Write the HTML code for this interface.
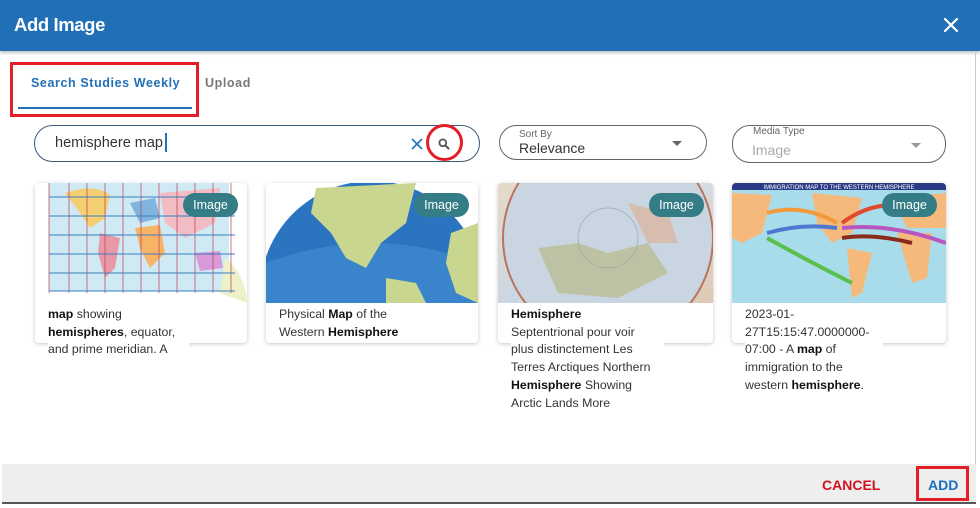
<!DOCTYPE html>
<html><head><meta charset="utf-8">
<style>
*{box-sizing:border-box;margin:0;padding:0}
body{width:980px;height:508px;overflow:hidden;background:#fff;font-family:"Liberation Sans",sans-serif;position:relative}
.hdr{position:absolute;left:0;top:0;width:980px;height:51px;background:#206fb7;box-shadow:0 2px 3px rgba(0,0,0,.25)}
.hdr h1{position:absolute;left:14px;top:14px;color:#fff;font-size:18.5px;font-weight:bold;letter-spacing:-0.4px}
.close{position:absolute;left:943px;top:17px;width:16px;height:16px}
.rline{position:absolute;left:975px;top:51px;width:1px;height:415px;background:#ccc}
.tab1{position:absolute;left:31px;top:76px;color:#2270b8;font-size:12.5px;font-weight:bold;letter-spacing:.6px}
.tab2{position:absolute;left:205px;top:76px;color:#777;font-size:12.5px;font-weight:bold;letter-spacing:.6px}
.uline{position:absolute;left:18px;top:107px;width:174px;height:2px;background:#2270b8}
.redbox{position:absolute;border:3px solid #e41e26}
.search{position:absolute;left:34px;top:125px;width:446px;height:37px;border:1.5px solid #3a5a78;border-radius:19px}
.search span{position:absolute;left:20px;top:9px;font-size:14.5px;color:#333}
.caret{position:absolute;left:165px;top:133px;width:1.5px;height:19px;background:#2270b8}
.sel{position:absolute;border:1.3px solid #666;border-radius:18px}
.sel .lab{position:absolute;left:19px;font-size:10px;color:#666}
.sel .val{position:absolute;left:19px;font-size:14px}
.tri{position:absolute;width:0;height:0;border-left:5px solid transparent;border-right:5px solid transparent;border-top:5px solid #666}
.card{position:absolute;top:183px;height:160px;background:#fff;border-radius:4px;box-shadow:0 1px 4px rgba(0,0,0,.22);overflow:visible}
.img{position:absolute;left:0;top:0;right:0;height:120px;overflow:hidden;border-radius:4px 4px 0 0}
.badge{position:absolute;top:10px;right:9px;width:55px;height:24px;border-radius:12px;background:#347c86;color:#fff;font-size:12.5px;text-align:center;line-height:24px}
.txt{position:absolute;left:13px;top:123px;font-size:12.3px;line-height:17.7px;color:#333;background:#fff;white-space:nowrap;padding-right:14px}
.txt b{color:#111}
.foot{position:absolute;left:2px;top:464px;width:974px;height:40px;background:#eeeeee;border-bottom:2px solid #555}
.cancel{position:absolute;left:822px;top:477px;color:#d0131f;font-weight:bold;font-size:14px}
.add{position:absolute;left:928px;top:477px;color:#1a6fc0;font-weight:bold;font-size:14px}
</style></head><body>
<div class="hdr"><h1>Add Image</h1>
<svg class="close" viewBox="0 0 16 16"><path d="M2 2L14 14M14 2L2 14" stroke="#fff" stroke-width="2.2" stroke-linecap="round"/></svg></div>
<div class="rline"></div>
<div class="tab1">Search Studies Weekly</div>
<div class="tab2">Upload</div>
<div class="uline"></div>
<div class="redbox" style="left:10px;top:62px;width:189px;height:55px"></div>

<div class="search"><span>hemisphere map</span>
<svg style="position:absolute;left:375px;top:11px" width="14" height="14" viewBox="0 0 14 14"><path d="M2 2L12 12M12 2L2 12" stroke="#2270b8" stroke-width="1.6"/></svg>
<svg style="position:absolute;left:402px;top:11px" width="14" height="14" viewBox="0 0 14 14"><circle cx="5.8" cy="5.8" r="3.4" fill="none" stroke="#555" stroke-width="1.8"/><path d="M8.3 8.3L11.5 11.5" stroke="#555" stroke-width="2" stroke-linecap="round"/></svg>
</div>
<div class="caret"></div>
<div class="redbox" style="left:426px;top:124px;width:37px;height:37px;border-radius:50%"></div>

<div class="sel" style="left:499px;top:125px;width:208px;height:35px"><div class="lab" style="top:3px">Sort By</div><div class="val" style="top:14px;color:#333">Relevance</div><div class="tri" style="left:172px;top:15px"></div></div>
<div class="sel" style="left:732px;top:125px;width:214px;height:38px"><div class="lab" style="top:0px;background:#fff;padding:0 2px;left:18px">Media Type</div><div class="val" style="top:16px;color:#aaa">Image</div><div class="tri" style="left:178px;top:17px;border-top-color:#999"></div></div>

<div class="card" style="left:35px;width:212px">
<div class="img" style="background:#d6eef8">
<svg width="212" height="120" viewBox="0 0 212 120">
<rect x="0" y="0" width="212" height="120" fill="#fff"/>
<rect x="14" y="0" width="180" height="108" fill="#cfe9f5"/>
<path d="M30 10 Q60 0 75 12 L70 35 L55 45 L45 30 Z" fill="#f4cf72"/>
<path d="M65 50 L85 55 L80 85 L70 95 L63 70 Z" fill="#e79aa5"/>
<path d="M95 20 L120 15 L125 35 L105 40 Z" fill="#7fb6e0"/>
<path d="M100 45 L125 42 L130 70 L115 85 L105 65 Z" fill="#f7b467"/>
<path d="M125 10 L185 5 L180 40 L150 55 L130 40 Z" fill="#f1bcc4"/>
<path d="M160 70 L185 68 L188 85 L165 88 Z" fill="#d89ad8"/>
<path d="M190 75 Q210 90 212 120 L185 110 Z" fill="#eef0c8"/>
<g stroke="#c23a55" stroke-width="1" opacity=".7"><path d="M14 0V110M34 0V110M52 0V110M70 0V110M88 0V110M106 0V110M124 0V110M142 0V110M160 0V110M178 0V110M196 0V110"/></g>
<g stroke="#3a7fc0" stroke-width="1.2" opacity=".8"><path d="M14 14H200M14 33H200M14 52H200M14 71H200M14 90H200M14 108H200"/></g>
</svg>
<div class="badge">Image</div></div>
<div class="txt"><b>map</b> showing<br><b>hemispheres</b>, equator,<br>and prime meridian. A</div></div>

<div class="card" style="left:266px;width:212px">
<div class="img" style="background:#fff">
<svg width="212" height="120" viewBox="0 0 212 120">
<circle cx="106" cy="110" r="112" fill="#2a74c0"/>
<path d="M0 80 Q106 40 212 80 L212 120 L0 120Z" fill="#4a93d6" opacity=".5"/>
<path d="M50 5 L150 0 L140 40 L115 60 L100 85 L80 75 L65 50 L45 30Z" fill="#c9d68f"/>
<path d="M120 95 L150 100 L160 120 L120 120Z" fill="#c9d68f"/>
<path d="M185 50 L212 40 L212 120 L190 110 L180 80Z" fill="#c9d68f"/>
</svg>
<div class="badge">Image</div></div>
<div class="txt">Physical <b>Map</b> of the<br>Western <b>Hemisphere</b></div></div>

<div class="card" style="left:498px;width:215px">
<div class="img" style="background:linear-gradient(135deg,#e8d9c8,#c9d7e4 40%,#d5dde6 60%,#dfc9b0)">
<svg width="215" height="120" viewBox="0 0 215 120">
<circle cx="110" cy="55" r="105" fill="#c9d6e2" stroke="#b9735c" stroke-width="2"/>
<path d="M40 65 L80 60 L110 70 L150 60 L170 90 L120 115 L60 110Z" fill="#b9b98a" opacity=".7"/>
<path d="M130 20 L170 30 L180 60 L150 60Z" fill="#d9b7a4" opacity=".8"/>
<circle cx="110" cy="55" r="30" fill="none" stroke="#9aa" stroke-width=".7"/>
</svg>
<div class="badge">Image</div></div>
<div class="txt"><b>Hemisphere</b><br>Septentrional pour voir<br>plus distinctement Les<br>Terres Arctiques Northern<br><b>Hemisphere</b> Showing<br>Arctic Lands More</div></div>

<div class="card" style="left:732px;width:214px">
<div class="img" style="background:#a9dcea">
<svg width="214" height="120" viewBox="0 0 214 120">
<rect width="214" height="7" fill="#2b3a86"/>
<text x="107" y="6" font-size="6" fill="#fff" text-anchor="middle" font-family="Liberation Sans">IMMIGRATION MAP TO THE WESTERN HEMISPHERE</text>
<path d="M0 10 L40 12 L30 50 L10 60 L0 55Z" fill="#f5b97c"/>
<path d="M80 10 L130 15 L120 50 L100 60 L85 40Z" fill="#f5b97c"/>
<path d="M115 65 L140 70 L130 110 L120 115Z" fill="#f5b97c"/>
<path d="M160 15 L214 10 L214 45 L175 45Z" fill="#f5b97c"/>
<path d="M165 50 L200 50 L195 95 L180 100Z" fill="#f5b97c"/>
<path d="M35 30 Q70 20 105 40" stroke="#f29a3a" stroke-width="4" fill="none"/>
<path d="M35 50 Q70 40 105 45" stroke="#4b78d0" stroke-width="4" fill="none"/>
<path d="M35 55 Q80 80 120 100" stroke="#5bbf4b" stroke-width="4" fill="none"/>
<path d="M200 30 Q150 10 110 40" stroke="#e24a30" stroke-width="4" fill="none"/>
<path d="M214 60 Q160 40 110 45" stroke="#b855c0" stroke-width="4" fill="none"/>
<path d="M180 60 Q140 50 110 55" stroke="#8a2a1a" stroke-width="4" fill="none"/>
</svg>
<div class="badge">Image</div></div>
<div class="txt">2023-01-<br>27T15:15:47.0000000-<br>07:00 - A <b>map</b> of<br>immigration to the<br>western <b>hemisphere</b>.</div></div>

<div class="foot"></div>
<div class="cancel">CANCEL</div>
<div class="add">ADD</div>
<div class="redbox" style="left:916px;top:466px;width:53px;height:35px"></div>
</body></html>
